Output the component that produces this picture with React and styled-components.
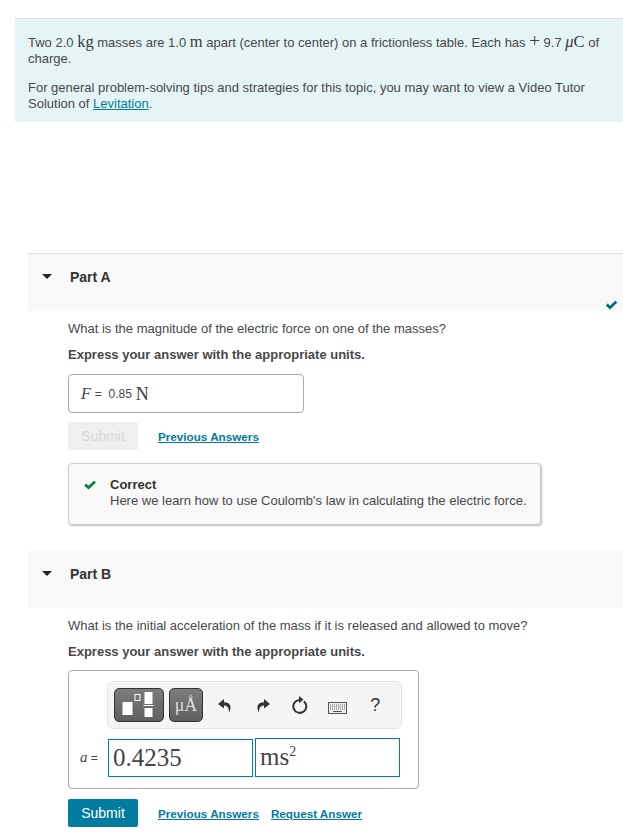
import React from 'react'
import styled, { createGlobalStyle } from 'styled-components'

const GlobalStyle = createGlobalStyle`
  html, body { margin: 0; padding: 0; background: #fff; }
  body {
    font-family: "Liberation Sans", Arial, sans-serif;
    font-size: 13px;
    color: #484848;
    overflow: hidden;
  }
`

const Page = styled.div`
  width: 623px;
  height: 833px;
  overflow: hidden;
  padding-top: 18px;
  box-sizing: border-box;
`

const Intro = styled.div`
  margin-left: 15px;
  height: 104px;
  box-sizing: border-box;
  padding: 12px 13px 0;
  background: #e5f5f6;
  border-top: 1px solid #ddd;
  line-height: 16px;
  p { margin: 0 0 13px; }
`

const MathText = styled.span`
  font-family: "Liberation Serif", serif;
  font-size: ${p => p.$size || 16.5}px;
  line-height: 1;
  color: #3a3a3a;
`

const Link = styled.a`
  color: #007c9e;
  text-decoration: underline;
  font-weight: ${p => (p.$bold ? 'bold' : 'normal')};
  font-size: ${p => (p.$bold ? '11.7px' : 'inherit')};
`

const Parts = styled.div`
  margin: 131px 0 0 28px;
`

const PartHeader = styled.div`
  position: relative;
  height: ${p => p.$h}px;
  box-sizing: border-box;
  margin-top: ${p => p.$gap || 0}px;
  padding: 15px 0 0 42px;
  background: #f8f8f8;
  border-top: ${p => (p.$line ? '1px solid #ddd' : 'none')};
  font-weight: bold;
  font-size: 14px;
  line-height: 16px;
  color: #333;
`

const Caret = styled.span`
  position: absolute;
  left: 14px;
  top: 20px;
  width: 0;
  height: 0;
  border-left: 5.5px solid transparent;
  border-right: 5.5px solid transparent;
  border-top: 5.5px solid #222;
`

const DoneMark = styled.svg`
  position: absolute;
  right: 5px;
  bottom: 1px;
`

const PartBody = styled.div`
  padding: 10px 0 0 40px;
`

const Prompt = styled.div`
  line-height: 16px;
`

const Instruction = styled.div`
  margin-top: 10px;
  line-height: 16px;
  font-weight: bold;
`

const AnswerBox = styled.div`
  margin-top: 11px;
  width: 236px;
  height: 39px;
  box-sizing: border-box;
  padding-left: 12px;
  display: flex;
  align-items: center;
  gap: 4px;
  border: 1px solid #aaa;
  border-radius: 4px;
  font-size: 12px;
`

const Var = styled.i`
  font-family: "Liberation Serif", serif;
  font-size: 16px;
  color: #444;
`

const Actions = styled.div`
  display: flex;
  align-items: center;
  gap: 20px;
  margin-top: ${p => p.$top}px;
`

const Submit = styled.button`
  width: 70px;
  height: 28px;
  padding: 0;
  border: none;
  border-radius: 2px;
  font-family: inherit;
  font-size: 14px;
  background: ${p => (p.disabled ? '#efefef' : '#007c9e')};
  color: ${p => (p.disabled ? '#d8d8d8' : '#fff')};
`

const LinkRow = styled.div`
  display: flex;
  gap: 12px;
`

const Feedback = styled.div`
  margin-top: 13px;
  width: 473px;
  height: 62px;
  box-sizing: border-box;
  padding: 13px 0 0 14px;
  display: flex;
  align-items: flex-start;
  gap: 13px;
  background: #f8f8f8;
  border: 1px solid #ccc;
  border-radius: 4px;
  box-shadow: 1px 1px 2px #bbb;
  line-height: 16px;
  svg { margin-top: 3px; flex: none; }
  strong { display: block; color: #333; }
`

const EditorBox = styled.div`
  margin-top: 10px;
  width: 351px;
  height: 119px;
  box-sizing: border-box;
  padding: 10px 18px 0 11px;
  border: 1px solid #aaa;
  border-radius: 4px;
`

const Toolbar = styled.div`
  margin-left: 27px;
  width: 295px;
  height: 48px;
  box-sizing: border-box;
  padding: 6px 0 0 6px;
  display: flex;
  align-items: flex-start;
  gap: 5px;
  background: #f5f5f5;
  border: 1px solid #e3e3e3;
  border-radius: 6px;
`

const ToolButton = styled.div`
  width: ${p => p.$w}px;
  height: 34px;
  box-sizing: border-box;
  display: flex;
  align-items: center;
  justify-content: center;
  background: linear-gradient(#7d7d7d, #5f5f5f);
  border: 1px solid #333;
  border-radius: 5px;
  color: #ddd;
  font-family: "Liberation Serif", serif;
  font-size: 18px;
`

const ToolIcons = styled.div`
  display: flex;
  gap: 5px;
  margin-left: 1px;
`

const ToolIcon = styled.div`
  width: 32.5px;
  height: 34px;
  display: flex;
  align-items: center;
  justify-content: center;
  color: #333;
  font-size: 18px;
`

const InputRow = styled.div`
  margin-top: 9px;
  display: flex;
  align-items: flex-end;
`

const Label = styled.span`
  width: 28px;
  height: 38px;
  flex: none;
  font-size: 12px;
  line-height: 36px;
  i { font-family: "Liberation Serif", serif; font-size: 15px; }
`

const MathInput = styled.div`
  height: ${p => p.$h}px;
  width: 145px;
  margin-left: ${p => p.$ml || 0}px;
  box-sizing: border-box;
  padding-left: 4px;
  border: 1px solid #007c9e;
  font-family: "Liberation Serif", serif;
  font-size: 25px;
  line-height: 36px;
  color: #444;
  sup { font-size: 14px; line-height: 0; vertical-align: super; }
`

const App = () => (
  <Page>
    <GlobalStyle />
    <Intro>
      <p>
        Two 2.0 <MathText>kg</MathText> masses are 1.0 <MathText>m</MathText> apart (center to center) on a frictionless table. Each has <MathText $size={19}>+</MathText> 9.7 <MathText><i>μ</i>C</MathText> of charge.
      </p>
      <p>
        For general problem-solving tips and strategies for this topic, you may want to view a Video Tutor Solution of <Link href="#">Levitation</Link>.
      </p>
    </Intro>
    <Parts>
      <PartHeader $h={58} $line>
        <Caret />
        Part A
        <DoneMark width="13" height="10" viewBox="0 0 16 12">
          <path d="M1 6.5 L3.4 4.2 L6.2 7 L12.8 0.8 L15.2 3 L6.2 11.4 Z" fill="#006a86" />
        </DoneMark>
      </PartHeader>
      <PartBody>
        <Prompt>What is the magnitude of the electric force on one of the masses?</Prompt>
        <Instruction>Express your answer with the appropriate units.</Instruction>
        <AnswerBox>
          <Var>F</Var> = &nbsp;0.85 <MathText $size={18}>N</MathText>
        </AnswerBox>
        <Actions $top={9}>
          <Submit disabled>Submit</Submit>
          <Link href="#" $bold>Previous Answers</Link>
        </Actions>
        <Feedback>
          <svg width="14" height="10" viewBox="0 0 16 12">
            <path d="M1 6.5 L3.4 4.2 L6.2 7 L12.8 0.8 L15.2 3 L6.2 11.4 Z" fill="#00843d" />
          </svg>
          <div>
            <strong>Correct</strong>
            Here we learn how to use Coulomb's law in calculating the electric force.
          </div>
        </Feedback>
      </PartBody>
      <PartHeader $h={57} $gap={26}>
        <Caret />
        Part B
      </PartHeader>
      <PartBody>
        <Prompt>What is the initial acceleration of the mass if it is released and allowed to move?</Prompt>
        <Instruction>Express your answer with the appropriate units.</Instruction>
        <EditorBox>
          <Toolbar>
            <ToolButton $w={50}>
              <svg width="36" height="28" viewBox="0 0 36 28">
                <rect x="1.5" y="11" width="10" height="13" fill="#fff" />
                <rect x="14" y="3.5" width="5" height="6" fill="none" stroke="#fff" />
                <rect x="23.5" y="1" width="8" height="12" fill="#fff" />
                <rect x="22.5" y="14" width="10" height="1" fill="#fff" />
                <rect x="23.5" y="17" width="8" height="9" fill="#fff" />
              </svg>
            </ToolButton>
            <ToolButton $w={34}>μÅ</ToolButton>
            <ToolIcons>
              <ToolIcon>
                <svg width="14" height="15" viewBox="0 0 14 15">
                  <path d="M6 1 L0 6 L6 10.5 V7.6 C9.5 7.6 11 10 11 14.5 C13.6 10 13.6 4.5 6 4.2 Z" fill="#333" />
                </svg>
              </ToolIcon>
              <ToolIcon>
                <svg width="14" height="15" viewBox="0 0 14 15">
                  <path d="M8 1 L14 6 L8 10.5 V7.6 C4.5 7.6 3 10 3 14.5 C0.4 10 0.4 4.5 8 4.2 Z" fill="#333" />
                </svg>
              </ToolIcon>
              <ToolIcon>
                <svg width="18" height="18" viewBox="0 0 18 18">
                  <path d="M8 3.9 A6.5 6.5 0 1 0 12.8 5.2" fill="none" stroke="#333" strokeWidth="2" />
                  <path d="M8 0 L12.5 3.6 L8 7.2 Z" fill="#333" />
                </svg>
              </ToolIcon>
              <ToolIcon>
                <svg width="19" height="18" viewBox="0 0 19 18">
                  <rect x="0.5" y="6.5" width="18" height="11" fill="#eee" stroke="#555" />
                  <path d="M2 9 H17 M2 11 H17 M2 13 H17" stroke="#666" strokeDasharray="1 1" />
                  <path d="M5 15.5 H14" stroke="#555" />
                </svg>
              </ToolIcon>
              <ToolIcon>?</ToolIcon>
            </ToolIcons>
          </Toolbar>
          <InputRow>
            <Label><i>a</i> =</Label>
            <MathInput $h={38}>0.4235</MathInput>
            <MathInput $h={39} $ml={2}>ms<sup>2</sup></MathInput>
          </InputRow>
        </EditorBox>
        <Actions $top={10}>
          <Submit>Submit</Submit>
          <LinkRow>
            <Link href="#" $bold>Previous Answers</Link>
            <Link href="#" $bold>Request Answer</Link>
          </LinkRow>
        </Actions>
      </PartBody>
    </Parts>
  </Page>
)

export default App
